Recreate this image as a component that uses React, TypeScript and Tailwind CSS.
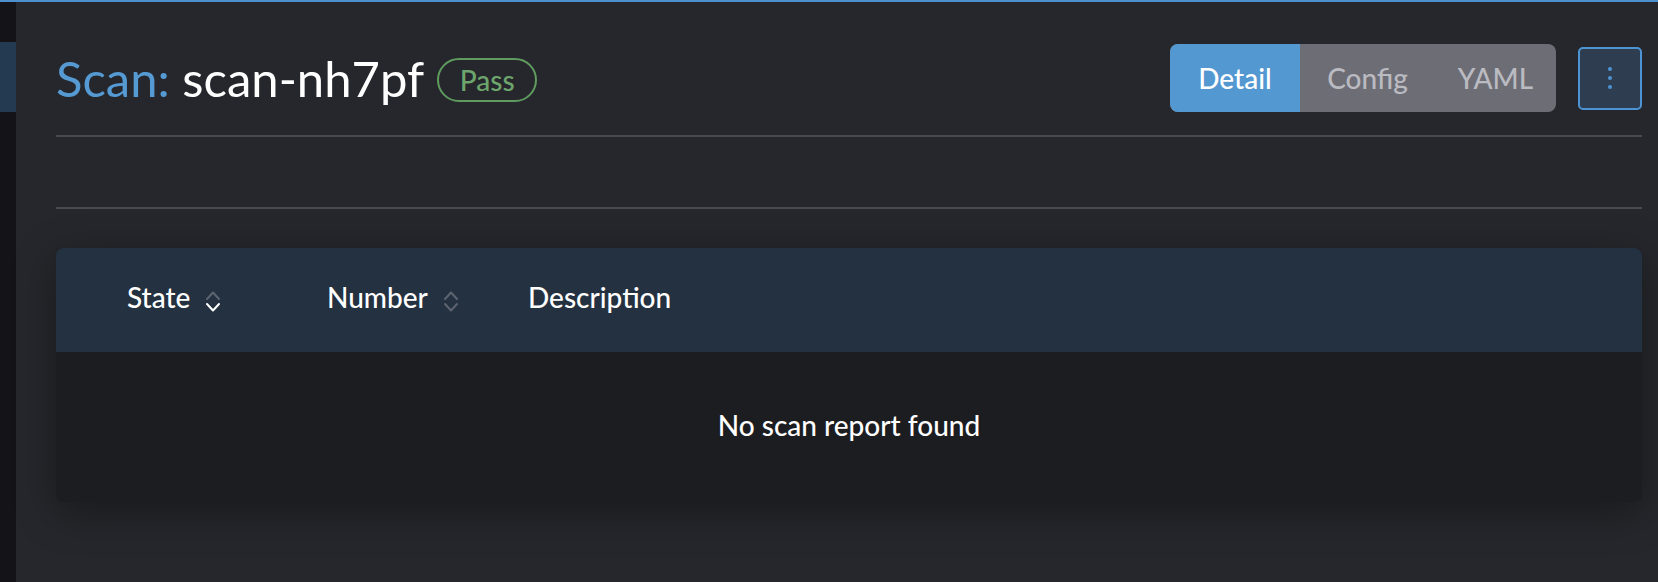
import React from 'react';

const FONT = "font-['Lato','Noto_Sans',sans-serif]";

interface Column {
  label: string;
  width: string;
  sort?: 'down' | 'none';
}

const COLUMNS: Column[] = [
  { label: 'State', width: 'w-[200px]', sort: 'down' },
  { label: 'Number', width: 'w-[201px]', sort: 'none' },
  { label: 'Description', width: 'flex-1' },
];

// up/down chevrons used as the sort toggle in the table header
function SortIcon({ active }: { active: 'down' | 'none' }) {
  return (
    <svg aria-hidden="true" className="ml-[15px] mt-[9px] h-6 w-4 shrink-0" fill="none" viewBox="0 0 16 24">
      <path d="M2 10 8 3.5 14 10" stroke="#5c6470" strokeLinecap="round" strokeLinejoin="round" strokeWidth="2" />
      <path
        d="M2 15 8 21.5 14 15"
        stroke={active === 'down' ? '#ffffff' : '#5c6470'}
        strokeLinecap="round"
        strokeLinejoin="round"
        strokeWidth="2"
      />
    </svg>
  );
}

export default function App() {
  return (
    <div className={`flex min-h-[582px] w-full border-t-2 border-[#4e8fce] bg-[#26272c] font-medium ${FONT}`}>
      <aside className="w-4 shrink-0 bg-[#141418]">
        <div className="mt-10 h-[70px] bg-[#243a50]" />
      </aside>

      <main className="flex-1 pl-10 pr-4">
        <div className="mt-[42px] flex h-[68px] items-center justify-between">
          <div className="flex items-center">
            <h1 className="text-[49px] font-normal leading-none text-white">
              <span className="text-[#559ad3]">Scan:</span> scan-nh7pf
            </h1>
            <span className="ml-[13px] mt-[4px] flex h-[44px] w-[100px] items-center justify-center rounded-full border-2 border-[#5f9b5f] text-[28px] text-[#6da56d]">
              Pass
            </span>
          </div>

          <div className="flex items-center">
            <div className="flex h-[68px] overflow-hidden rounded-lg bg-[#6d6d75] text-[28px]">
              <button className="flex w-[130px] items-center justify-center bg-[#5398d1] text-white">Detail</button>
              <button className="flex w-[135px] items-center justify-center text-[#babac1]">Config</button>
              <button className="flex w-[121px] items-center justify-center text-[#babac1]">YAML</button>
            </div>
            <button className="ml-[22px] flex h-[63px] w-16 flex-col items-center justify-center gap-[5px] rounded-[5px] border-2 border-[#4d94d4] bg-[#2e3d4f]">
              <span className="h-1 w-1 rounded-full bg-[#4d94d4]" />
              <span className="h-1 w-1 rounded-full bg-[#4d94d4]" />
              <span className="h-1 w-1 rounded-full bg-[#4d94d4]" />
            </button>
          </div>
        </div>

        <div className="mt-[23px] h-[2px] bg-[#4a4b50]" />
        <div className="h-[70px]" />
        <div className="h-[2px] bg-[#4a4b50]" />

        <div className="mt-[39px] overflow-hidden rounded-lg bg-[#1c1d21] shadow-[0_10px_40px_rgba(0,0,0,0.35)]">
          <div className="flex h-[104px] items-center bg-[#243140] pb-[7px] pl-[71px] text-[28px] text-white">
            {COLUMNS.map((column) => (
              <div key={column.label} className={`flex items-center ${column.width}`}>
                <span>{column.label}</span>
                {column.sort && <SortIcon active={column.sort} />}
              </div>
            ))}
          </div>
          <div className="flex h-[150px] items-center justify-center pb-[4px] text-[28px] text-white">
            No scan report found
          </div>
        </div>
      </main>
    </div>
  );
}
